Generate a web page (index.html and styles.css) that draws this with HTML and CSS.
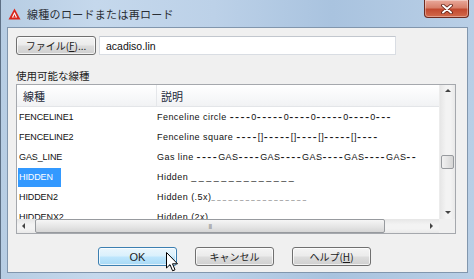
FILE: index.html
```html
<!DOCTYPE html>
<html lang="ja">
<head>
<meta charset="utf-8">
<link rel="stylesheet" href="styles.css">
</head>
<body>
<div class="window">
  <div class="titlebar">
    <svg class="appicon" width="13" height="12" viewBox="0 0 13 12">
      <path d="M6.5 0.5 L12.5 11.5 L0.5 11.5 Z" fill="#d9261c"/>
      <path d="M6.5 4 L9.2 9.5 L3.8 9.5 Z" fill="#fff"/>
      <path d="M6.5 6.2 L7.8 9.5 L5.2 9.5 Z" fill="#d9261c"/>
    </svg>
    <span class="title">線種のロードまたは再ロード</span>
    <div class="close">
      <svg width="14" height="10" viewBox="0 0 14 10">
        <path d="M3 1.5 L11 8.5 M11 1.5 L3 8.5" stroke="#5a1a10" stroke-width="3.6" stroke-linecap="round"/>
        <path d="M3 1.5 L11 8.5 M11 1.5 L3 8.5" stroke="#fff" stroke-width="2" stroke-linecap="round"/>
      </svg>
    </div>
  </div>
  <div class="client">
    <div class="filerow">
      <button class="btn filebtn">ファイル(<u>F</u>)...</button>
      <div class="input">acadiso.lin</div>
    </div>
    <div class="label">使用可能な線種</div>
    <div class="listbox">
      <div class="listmain">
        <div class="view">
          <div class="header">
            <div class="hcol c1">線種</div>
            <div class="hcol c2">説明</div>
          </div>
          <div class="row"><div class="cell c1"><span class="name">FENCELINE1</span></div><div class="cell c2 desc">Fenceline circle <span class="d">----</span>0<span class="d">-----</span>0<span class="d">----</span>0<span class="d">-----</span>0<span class="d">----</span>0<span class="d">---</span></div></div>
          <div class="row"><div class="cell c1"><span class="name">FENCELINE2</span></div><div class="cell c2 desc">Fenceline square <span class="d">----</span>[]<span class="d">-----</span>[]<span class="d">----</span>[]<span class="d">-----</span>[]<span class="d">----</span></div></div>
          <div class="row"><div class="cell c1"><span class="name">GAS_LINE</span></div><div class="cell c2 desc">Gas line <span class="d">----</span>GAS<span class="d">----</span>GAS<span class="d">----</span>GAS<span class="d">----</span>GAS<span class="d">----</span>GAS<span class="d">--</span></div></div>
          <div class="row"><div class="cell c1"><span class="name sel">HIDDEN</span></div><div class="cell c2 desc">Hidden <span class="u">_ _ _ _ _ _ _ _ _ _ _ _ _ _</span></div></div>
          <div class="row"><div class="cell c1"><span class="name">HIDDEN2</span></div><div class="cell c2 desc">Hidden (.5x)<span class="u2">_ _ _ _ _ _ _ _ _ _ _ _ _ _ _ _ _</span></div></div>
          <div class="row"><div class="cell c1"><span class="name">HIDDENX2</span></div><div class="cell c2 desc">Hidden (2x)<span class="u">____ ____ ____ ____</span></div></div>
        </div>
        <div class="vscroll">
          <div class="arrow up"></div>
          <div class="vtrack"><div class="vthumb"></div></div>
          <div class="arrow down"></div>
        </div>
      </div>
      <div class="hbar">
        <div class="hscroll">
          <div class="arrow left"></div>
          <div class="htrack"><div class="hthumb"><span class="grip">|||</span></div></div>
          <div class="arrow right"></div>
        </div>
        <div class="corner"></div>
      </div>
    </div>
    <div class="btnrow">
      <button class="btn ok">OK</button>
      <button class="btn">キャンセル</button>
      <button class="btn">ヘルプ(<u>H</u>)</button>
    </div>
  </div>
  <svg class="cursor" width="13" height="20" viewBox="0 0 13 20">
    <path d="M0.5 0.5 L0.5 16 L4 12.6 L6.6 18.8 L9 17.8 L6.5 11.8 L11.5 11.8 Z" fill="#fff" stroke="#000" stroke-width="1" stroke-linejoin="miter"/>
  </svg>
</div>
</body>
</html>
```

FILE: styles.css
```css
* { box-sizing: border-box; }
html, body { margin: 0; padding: 0; }
body {
  width: 474px;
  height: 279px;
  overflow: hidden;
  font-family: "Liberation Sans", "Noto Sans CJK JP", sans-serif;
}
.window {
  position: relative;
  width: 474px;
  height: 279px;
  background: linear-gradient(90deg, #b7cde3 0%, #c5d8ec 20%, #bcd1e8 45%, #a9c3df 70%, #b9cfe6 100%);
  border-left: 1px solid #5d6f84;
  display: flex;
  flex-direction: column;
  padding: 0 6px 6px 6px;
}
.titlebar {
  height: 27px;
  display: flex;
  align-items: center;
  position: relative;
  flex: none;
}
.appicon { margin-left: 1px; margin-right: 6px; margin-top: 1px; }
.title {
  font-family: "Noto Sans CJK JP", sans-serif;
  font-size: 11px;
  letter-spacing: 0.3px;
  color: #2a2f36;
  margin-top: 1px;
}
.close {
  position: absolute;
  right: -1px;
  top: 0;
  width: 45px;
  height: 18px;
  border: 1px solid #6d2a1f;
  border-top: none;
  border-radius: 0 0 4px 4px;
  background: linear-gradient(180deg, #e9a99b 0%, #d8806b 45%, #c24a30 55%, #d26a4c 100%);
  box-shadow: inset 0 0 0 1px rgba(255,255,255,0.35);
  display: flex;
  align-items: center;
  justify-content: center;
}
.client {
  flex: 1;
  background: #f0f0f0;
  border: 1px solid #8196ad;
  padding: 8px 12px 0 8px;
  display: flex;
  flex-direction: column;
}
.filerow {
  display: flex;
  align-items: center;
  height: 19px;
  gap: 3px;
}
.btn {
  font-family: "Noto Sans CJK JP", "Liberation Sans", sans-serif;
  font-size: 10px;
  color: #1b1b1b;
  width: 79px;
  height: 19px;
  padding: 0;
  border: 1px solid #707070;
  border-radius: 3px;
  background: linear-gradient(180deg, #f4f4f4 0%, #ebebeb 48%, #dddddd 52%, #cfcfcf 100%);
  box-shadow: inset 0 0 0 1px rgba(255,255,255,0.7);
  line-height: 16px;
}
.filebtn { width: 80px; }
.input {
  width: 297px;
  height: 19px;
  background: #fff;
  border: 1px solid #d9dde3;
  border-top-color: #c2c7ce;
  font-family: "Liberation Sans", sans-serif;
  font-size: 10.5px;
  color: #111;
  padding: 2px 0 0 6px;
  line-height: 14px;
}
.label {
  font-family: "Noto Sans CJK JP", sans-serif;
  font-size: 10.5px;
  color: #1e1e1e;
  margin-top: 13px;
  height: 15px;
  line-height: 15px;
}
.listbox {
  margin-top: 1px;
  width: 440px;
  height: 150px;
  border: 1px solid #a5a8ad;
  background: #fff;
  display: flex;
  flex-direction: column;
}
.listmain { flex: 1; display: flex; min-height: 0; }
.view { flex: 1; overflow: hidden; }
.header {
  height: 22px;
  display: flex;
  background: linear-gradient(180deg, #ffffff 0%, #f7f8f9 60%, #f1f2f4 100%);
  border-bottom: 1px solid #e3e5e8;
}
.hcol {
  font-family: "Noto Sans CJK JP", sans-serif;
  font-size: 11px;
  color: #1e2a3a;
  line-height: 22px;
}
.hcol.c1 { width: 140px; padding-left: 6px; border-right: 1px solid #e5e7ea; }
.hcol.c2 { padding-left: 4px; }
.row { height: 20px; display: flex; align-items: center; }
.row:first-of-type { margin-top: 2px; }
.cell { font-size: 9px; line-height: 12px; color: #111; white-space: nowrap; }
.cell.c1 { width: 140px; padding-left: 1px; }
.name { display: inline-block; padding: 0 1px; line-height: 19px; letter-spacing: -0.1px; }
.name.sel { background: #3399ff; color: #fff; width: 43px; }
.desc { letter-spacing: 0.45px; }
.d { font-size: 12px; line-height: 10px; letter-spacing: 1.4px; vertical-align: -1px; }
.u { letter-spacing: 0; }
.u2 { font-size: 6px; line-height: 6px; letter-spacing: 0.35px; }
.vscroll {
  width: 16px;
  background: linear-gradient(90deg, #e6e6e6, #f3f3f3 40%, #f3f3f3 70%, #e9e9e9);
  border-left: 1px solid #ececec;
  display: flex;
  flex-direction: column;
}
.vtrack { flex: 1; position: relative; }
.vthumb {
  position: absolute;
  left: 1px; right: 1px;
  top: 54px;
  height: 14px;
  border: 1px solid #979a9e;
  border-radius: 2px;
  background: linear-gradient(90deg, #f1f1f1, #e4e4e4 50%, #d5d5d5);
}
.arrow { width: 16px; height: 16px; position: relative; flex: none; }
.arrow::after {
  content: "";
  position: absolute;
  width: 0; height: 0;
  border: 3px solid transparent;
}
.arrow.up::after { left: 5px; top: 4px; border-bottom: 3px solid #444; border-top: none; }
.arrow.down::after { left: 5px; top: 8px; border-top: 3px solid #444; border-bottom: none; }
.arrow.left::after { left: 5px; top: 4px; border-right: 3px solid #444; border-left: none; }
.arrow.right::after { left: 7px; top: 4px; border-left: 3px solid #444; border-right: none; }
.hbar { height: 14px; display: flex; flex: none; }
.hscroll {
  flex: 1;
  display: flex;
  background: linear-gradient(180deg, #e6e6e6, #f3f3f3 40%, #f3f3f3 70%, #e9e9e9);
}
.hscroll .arrow { height: 14px; }
.htrack { flex: 1; position: relative; }
.hthumb {
  position: absolute;
  left: 2px; width: 350px; top: 0; bottom: 0;
  border: 1px solid #979a9e;
  border-radius: 2px;
  background: linear-gradient(180deg, #f6f6f6, #e7e7e7 50%, #d6d6d6);
  display: flex; align-items: center; justify-content: center;
}
.grip { font-size: 6px; color: #777; letter-spacing: -0.5px; }
.corner { width: 16px; background: #f0f0f0; }
.btnrow {
  display: flex;
  gap: 18px;
  margin-top: 13px;
  padding-left: 82px;
}
.btn.ok {
  border-color: #3c7fb1;
  background: linear-gradient(180deg, #eaf6fd 0%, #d9f0fc 48%, #bee6fd 52%, #a7d9f5 100%);
  font-family: "Liberation Sans", sans-serif;
  font-size: 11px;
}
.cursor { position: absolute; left: 165px; top: 252px; }
```
